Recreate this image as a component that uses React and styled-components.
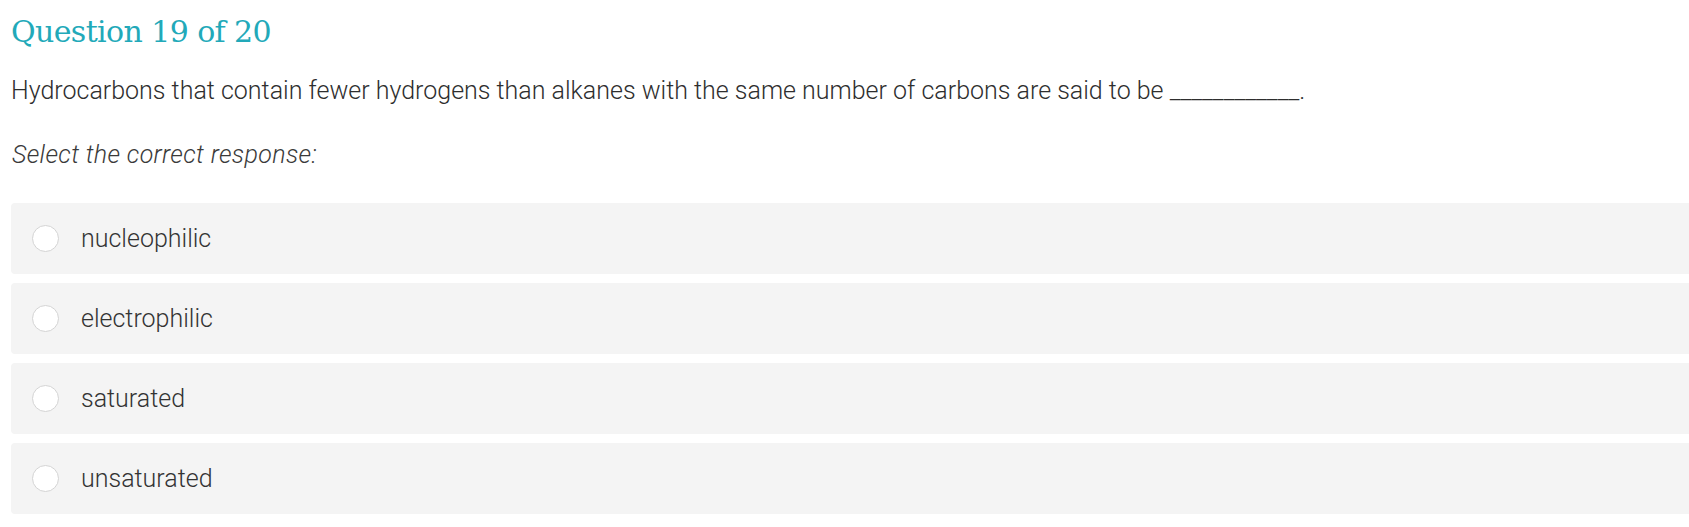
import React from 'react'
import styled, { createGlobalStyle } from 'styled-components'

const GlobalStyle = createGlobalStyle`
  html, body {
    margin: 0;
    padding: 0;
    background: #fff;
  }
  body {
    font-family: Roboto, "Liberation Sans", sans-serif;
    color: #333;
  }
`

const options = ['nucleophilic', 'electrophilic', 'saturated', 'unsaturated']

function App() {
  return (
    <>
      <GlobalStyle />
      <Page>
        <Title>Question 19 of 20</Title>
        <Prompt>
          Hydrocarbons that contain fewer hydrogens than alkanes with the same number of carbons are said to be ____________.
        </Prompt>
        <Hint>Select the correct response:</Hint>
        <Options>
          {options.map((opt) => (
            <Option key={opt}>
              <Radio type="radio" name="answer" value={opt} />
              <OptionLabel>{opt}</OptionLabel>
            </Option>
          ))}
        </Options>
      </Page>
    </>
  )
}

export default App

const Page = styled.div`
  padding: 14px 0 0 11px;
  box-sizing: border-box;
`

const Title = styled.h2`
  margin: 0;
  font-family: "DejaVu Serif", "Liberation Serif", serif;
  font-weight: 400;
  font-size: 30px;
  line-height: 36px;
  letter-spacing: -0.6px;
  color: #22a9b9;
`

const Prompt = styled.p`
  margin: 27px 0 0 0;
  font-size: 25px;
  line-height: 28px;
  font-weight: 300;
  color: #2e2e2e;
`

const Hint = styled.p`
  margin: 36px 0 0 1px;
  font-size: 25px;
  line-height: 28px;
  font-weight: 300;
  font-style: italic;
  letter-spacing: 0.35px;
  color: #3a3a3a;
`

const Options = styled.div`
  margin-top: 34px;
  display: flex;
  flex-direction: column;
  gap: 9px;
`

const Option = styled.label`
  display: flex;
  align-items: center;
  gap: 22px;
  height: 71px;
  padding-left: 21px;
  background: #f4f4f4;
  border-radius: 4px 0 0 4px;
  cursor: pointer;
`

const Radio = styled.input`
  appearance: none;
  margin: 0;
  width: 27px;
  height: 27px;
  border-radius: 50%;
  border: 1.5px solid #d4d4d4;
  background: #fff;
  box-sizing: border-box;
  flex-shrink: 0;
`

const OptionLabel = styled.span`
  font-size: 25px;
  font-weight: 300;
  color: #333;
`
